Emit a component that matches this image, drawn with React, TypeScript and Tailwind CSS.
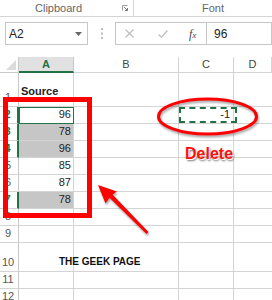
import React from "react";

type Row = { n: string; h: number; sel: boolean; a?: string; fill?: boolean; active?: boolean };

const rows: Row[] = [
  { n: "1", h: 34, sel: false },
  { n: "2", h: 17, sel: true, a: "96", active: true },
  { n: "3", h: 17, sel: true, a: "78", fill: true },
  { n: "4", h: 17, sel: true, a: "96", fill: true },
  { n: "5", h: 17, sel: false, a: "85" },
  { n: "6", h: 17, sel: false, a: "87" },
  { n: "7", h: 17, sel: true, a: "78", fill: true },
  { n: "8", h: 17, sel: false },
  { n: "9", h: 17, sel: false },
  { n: "10", h: 29, sel: false },
  { n: "11", h: 17, sel: false },
  { n: "12", h: 17, sel: false },
];

export default function App() {
  return (
    <div className="relative w-[272px] h-[300px] overflow-hidden bg-white font-['Liberation_Sans',Arial,sans-serif] text-[#222]">
      {/* ribbon group labels */}
      <div className="flex h-[17px] border-b border-[#d5d5d5] text-[11px] text-[#666]">
        <div className="w-[134px] flex items-center border-r border-[#d5d5d5]">
          <span className="ml-[35px]">Clipboard</span>
          <svg className="ml-auto mr-[5px]" width="6" height="6" viewBox="0 0 6 6">
            <path d="M0.5 5.5V0.5H5.5" fill="none" stroke="#999" strokeWidth="1" />
            <path d="M2 2L5.5 5.5M5.5 3V5.5H3" fill="none" stroke="#777" strokeWidth="1" />
          </svg>
        </div>
        <div className="flex-1 flex items-center">
          <span className="ml-[68px]">Font</span>
        </div>
      </div>

      {/* formula bar */}
      <div className="flex h-[23px] mt-[5px] text-[12px]">
        <div className="ml-[5px] w-[83px] flex items-center border border-[#c6c6c6] pl-[3px] pr-[5px]">
          <span>A2</span>
          <svg className="ml-auto" width="7" height="4" viewBox="0 0 7 4">
            <path d="M0 0H7L3.5 4Z" fill="#666" />
          </svg>
        </div>
        <div className="w-[27px] flex items-center justify-center">
          <svg width="2" height="11" viewBox="0 0 2 11">
            <rect x="0" y="0" width="2" height="2" fill="#bbb" />
            <rect x="0" y="4.5" width="2" height="2" fill="#bbb" />
            <rect x="0" y="9" width="2" height="2" fill="#bbb" />
          </svg>
        </div>
        <div className="w-[91px] flex items-center border-y border-l border-[#c6c6c6] relative">
          <svg className="absolute left-[9px]" width="9" height="9" viewBox="0 0 9 9">
            <path d="M0.5 0.5L8.5 8.5M8.5 0.5L0.5 8.5" stroke="#bdbdbd" strokeWidth="1.2" />
          </svg>
          <svg className="absolute left-[42px]" width="10" height="8" viewBox="0 0 10 8">
            <path d="M0.5 4.5L3.5 7.2L9.5 0.5" fill="none" stroke="#bdbdbd" strokeWidth="1.2" />
          </svg>
          <span className="absolute left-[73px] italic font-['Liberation_Serif',serif] text-[12px] text-[#444]">
            f<span className="text-[9px]">x</span>
          </span>
        </div>
        <div className="flex-1 flex items-center border border-[#c6c6c6] pl-[7px]">96</div>
      </div>

      {/* sheet grid */}
      <div className="mt-[12px] grid grid-cols-[19px_55px_105px_55px_1fr] text-[11px]">
        {/* header row */}
        <div className="h-[16px] border-r border-b border-[#c8c8c8] relative">
          <svg className="absolute right-[2px] bottom-[2px]" width="10" height="10" viewBox="0 0 10 10">
            <path d="M10 0V10H0Z" fill="#dcdcdc" />
          </svg>
        </div>
        <div className="h-[16px] flex items-center justify-center bg-[#e1e1e1] border-r border-[#c8c8c8] border-b-2 border-b-[#217346] text-[#217346] font-bold text-[11px]">
          A
        </div>
        {["B", "C", "D"].map((c) => (
          <div key={c} className="h-[16px] flex items-center justify-center border-r border-b border-[#d4d4d4] text-[#444]">
            {c}
          </div>
        ))}

        {rows.map((r) => (
          <React.Fragment key={r.n}>
            <div
              style={{ height: r.h }}
              className={`flex items-end justify-center pb-[1px] pr-[2px] border-b border-[#d4d4d4] text-[11px] ${
                r.sel
                  ? "border-r-2 border-r-[#217346] text-[#217346] font-bold"
                  : "border-r border-r-[#c8c8c8] text-[#555]"
              }`}
            >
              {r.n}
            </div>
            <div
              style={{ height: r.h }}
              className={`flex items-end border-r border-b border-[#d4d4d4] ${
                r.fill ? "bg-[#c6c6c6]" : ""
              } ${r.active ? "outline outline-1 outline-[#217346] -outline-offset-1" : ""} ${
                r.n === "1" || r.n === "10" ? "justify-start" : "justify-end pr-[2px]"
              } pb-[1px] relative`}
            >
              {r.n === "1" && <span className="font-bold text-[11px] pl-[2px] pb-[6px]">Source</span>}
              {r.n === "10" && (
                <span className="absolute left-[40px] bottom-[2px] whitespace-nowrap font-bold text-[10px] text-[#111]">
                  THE GEEK PAGE
                </span>
              )}
              {r.a && <span>{r.a}</span>}
            </div>
            <div style={{ height: r.h }} className="border-r border-b border-[#d4d4d4]" />
            <div style={{ height: r.h }} className="relative flex items-end justify-end pr-[3px] pb-[1px] border-r border-b border-[#d4d4d4]">
              {r.n === "2" && (
                <>
                  <div className="absolute left-0 top-0 w-[58px] h-[16px] border-2 border-dashed border-[#217346]" />
                  <span>-1</span>
                </>
              )}
            </div>
            <div style={{ height: r.h }} className="border-b border-[#d4d4d4]" />
          </React.Fragment>
        ))}
      </div>

      {/* annotations over the sheet */}
      <div className="absolute left-[3px] top-[97px] w-[89px] h-[121px] border-[5px] border-[#ff0000]" />

      <svg className="absolute left-0 top-0 [filter:drop-shadow(1px_2px_1px_rgba(0,0,0,0.35))]" width="272" height="300" viewBox="0 0 272 300">
        <ellipse cx="207.5" cy="116.5" rx="49" ry="17.5" fill="none" stroke="#ff0000" strokeWidth="3" />
        <polygon points="98,185 117,191.5 112.5,194.5 148.5,232 146.5,234 109.5,197.8 105.5,203.5" fill="#ff0000" />
      </svg>

      <div className="absolute left-[185px] top-[142px] text-[16px] font-bold text-[#ff1010] [text-shadow:1px_1px_0_#fff,1.5px_2px_2px_rgba(0,0,0,0.55)]">
        Delete
      </div>
    </div>
  );
}
